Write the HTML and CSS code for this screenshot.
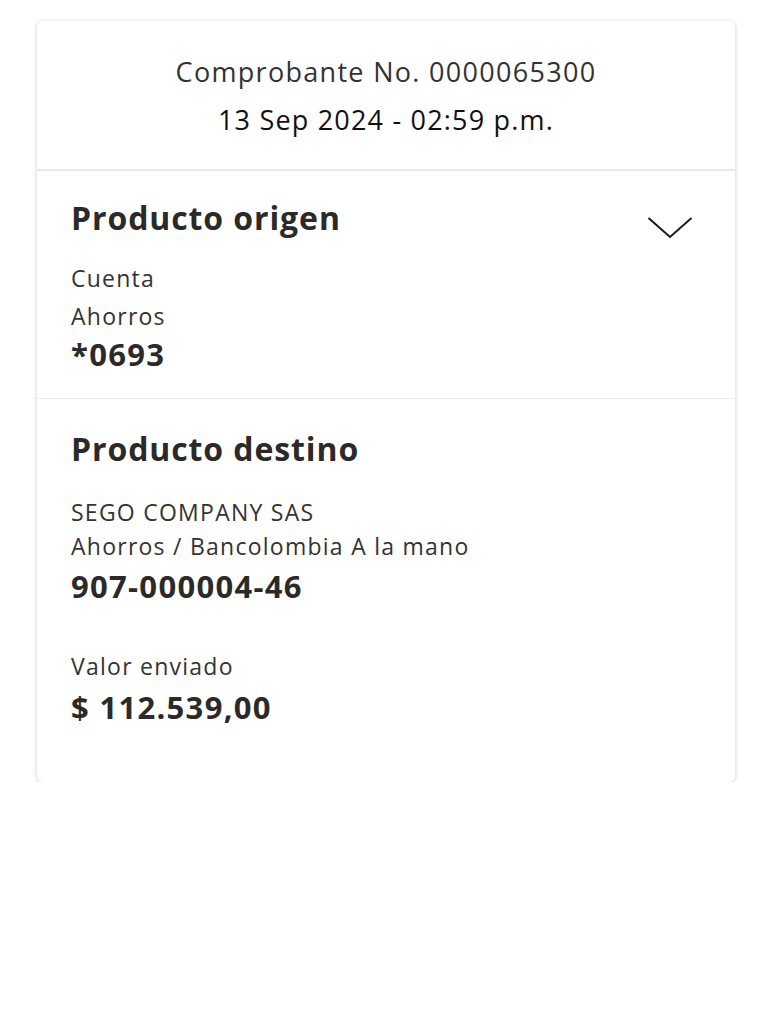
FILE: index.html
```html
<!DOCTYPE html>
<html>
<head>
    <meta charset="UTF-8">
    <title>Comprobante</title>
    <link rel="stylesheet" href="styles.css">
</head>
<body>
    <div class="card">
        <div class="card-head">
            <p class="voucher">Comprobante No. 0000065300</p>
            <p class="date">13 Sep 2024 - 02:59 p.m.</p>
        </div>
        <div class="section first">
            <div class="section-top">
                <h2 class="title">Producto origen</h2>
                <svg class="chevron" width="46" height="26" viewBox="0 0 46 26">
                    <path d="M1.5 3 L23 22 L44.5 3" fill="none" stroke="#1a1a1a" stroke-width="2"/>
                </svg>
            </div>
            <p class="label origin-first">Cuenta</p>
            <p class="label">Ahorros</p>
            <p class="value">*0693</p>
        </div>
        <div class="section last">
            <h2 class="title">Producto destino</h2>
            <p class="label tight dest-first">SEGO COMPANY SAS</p>
            <p class="label tight">Ahorros / Bancolombia A la mano</p>
            <p class="value after-tight">907-000004-46</p>
            <p class="label amount-label">Valor enviado</p>
            <p class="value amount">$ 112.539,00</p>
        </div>
    </div>
</body>
</html>
```

FILE: styles.css
```css
html,body,div,p,h2{ margin: 0; padding: 0; }
body{ background: #fff; font-family: "Open Sans", "Noto Sans", sans-serif; color: #2c2a29; }

.card{ width: 698px; margin: 21px 0 0 37px; background: #fff; border-radius: 6px; box-shadow: 0 1px 5px rgba(0,0,0,0.2); }

/* cabecera */
.card-head{ height: 150px; border-bottom: 2px solid #e5eaea; text-align: center; box-sizing: border-box; padding-top: 32px; }
.voucher{ font-size: 27px; line-height: 38px; letter-spacing: 1.3px; color: #333; }
.date{ font-size: 27px; line-height: 38px; letter-spacing: 1.2px; margin-top: 10px; color: #111; }

/* secciones */
.section{ padding: 27px 34px 25px 34px; border-bottom: 1px solid #ececec; }
.section.last{ border-bottom: 0; padding-top: 30px; padding-bottom: 56px; }
.section-top{ display: flex; justify-content: space-between; align-items: flex-start; }
.title{ font-size: 32px; line-height: 40px; font-weight: 700; letter-spacing: 0.9px; color: #2c2a29; }
.chevron{ margin: 17px 8px 0 0; }

.label{ font-size: 23px; line-height: 38px; letter-spacing: 1.25px; color: #333; }
.label.tight{ line-height: 34px; }
.origin-first{ margin-top: 18px; }
.dest-first{ margin-top: 26px; }
.value{ font-size: 31px; line-height: 38px; font-weight: 700; letter-spacing: 1.3px; color: #2c2a29; }
.after-tight{ margin-top: 4px; }
.amount-label{ margin-top: 42px; }
.amount{ margin-top: 3px; }
```
